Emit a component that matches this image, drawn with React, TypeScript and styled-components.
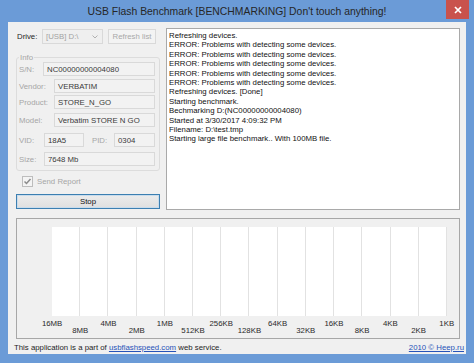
import React from 'react';
import styled, { createGlobalStyle } from 'styled-components';

const GlobalStyle = createGlobalStyle`
  html, body {
    margin: 0;
    padding: 0;
  }
  body {
    background-color: #6b9bd7;
    font-family: 'Liberation Sans', Arial, sans-serif;
  }
  * {
    box-sizing: border-box;
  }
`;

const Window = styled.div`
  display: flex;
  flex-direction: column;
  width: 474px;
  height: 363px;
  background-color: #6b9bd7;
  overflow: hidden;
`;

const TitleBar = styled.div`
  display: grid;
  grid-template-columns: 28px 1fr 28px;
  align-items: start;
  height: 22px;
  flex-shrink: 0;
`;

const Title = styled.div`
  grid-column: 2;
  align-self: center;
  text-align: center;
  font-size: 10.4px;
  line-height: 12px;
  padding-top: 1px;
  color: #262626;
  white-space: nowrap;
`;

const CloseButton = styled.div`
  display: flex;
  align-items: center;
  justify-content: center;
  width: 23px;
  height: 19px;
  background-color: #c9524c;
`;

const Client = styled.div`
  display: flex;
  flex-direction: column;
  flex: 1;
  margin: 0 8px 9px;
  padding: 6px 6px 0 8px;
  background-color: #f0f0f0;
  font-size: 7.8px;
  line-height: 9px;
  color: #1e1e1e;
`;

const TopArea = styled.div`
  display: flex;
  gap: 6px;
  height: 182px;
`;

const LeftColumn = styled.div`
  display: flex;
  flex-direction: column;
  width: 144px;
  flex-shrink: 0;
`;

const DriveRow = styled.div`
  display: flex;
  align-items: center;
  height: 15px;
  margin-top: 1px;
`;

const DriveLabel = styled.span`
  width: 26px;
  padding-left: 1px;
`;

const Combo = styled.div`
  display: flex;
  align-items: center;
  justify-content: space-between;
  width: 61px;
  height: 15px;
  padding: 0 4px 0 3px;
  border: 1px solid #d9d9d9;
  background-color: #efefef;
  color: #a2a2a2;
`;

const SmallButton = styled.div`
  display: flex;
  align-items: center;
  justify-content: center;
  width: 48px;
  height: 15px;
  margin-left: 5px;
  border: 1px solid #d9d9d9;
  background-color: #f3f3f3;
  color: #a8a8a8;
`;

const InfoGroup = styled.fieldset`
  margin: 9px 0 0;
  padding: 0 4px 4px 1px;
  border: 1px solid #dcdcdc;
  border-radius: 3px;
  min-width: 0;
`;

const Legend = styled.legend`
  margin-left: 1px;
  padding: 0 1px;
  color: #a6a6a6;
`;

const FieldRow = styled.div<{ $gap: number }>`
  display: flex;
  align-items: center;
  height: 14px;
  margin-top: ${(p) => p.$gap}px;
`;

const FieldLabel = styled.span<{ $width: number }>`
  width: ${(p) => p.$width}px;
  flex-shrink: 0;
  padding-left: 1px;
  color: #a6a6a6;
  white-space: nowrap;
`;

const FieldBox = styled.div<{ $width?: number }>`
  display: flex;
  align-items: center;
  height: 14px;
  ${(p) => (p.$width ? `width: ${p.$width}px;` : 'flex: 1;')}
  flex-shrink: 0;
  padding-left: 3px;
  border: 1px solid #d9d9d9;
  background-color: #f2f2f2;
  color: #3a3a3a;
  white-space: nowrap;
  overflow: hidden;
`;

const CheckRow = styled.div`
  display: flex;
  align-items: center;
  gap: 4px;
  height: 11px;
  margin-top: 5px;
  padding-left: 6px;
  color: #a6a6a6;
`;

const StopButton = styled.div`
  display: flex;
  align-items: center;
  justify-content: center;
  height: 15px;
  margin-top: 7px;
  border: 1px solid #3c7fb1;
  background: linear-gradient(#ececec, #dfdfdf);
  box-shadow: inset 0 0 0 1px #c9dcec;
  color: #111;
`;

const LogBox = styled.div`
  flex: 1;
  padding: 2px 2px;
  border: 1px solid #a9a9a9;
  background-color: #fff;
  color: #111;
`;

const LogLine = styled.div`
  line-height: 9.4px;
  white-space: nowrap;
`;

const ChartPanel = styled.div`
  display: flex;
  flex-direction: column;
  height: 121px;
  margin-top: 8px;
  padding: 8px 0 0 35px;
  border: 1px solid #a7a7a7;
  background-color: #f0f0f0;
`;

const Plot = styled.div`
  display: grid;
  grid-template-columns: repeat(14, 1fr);
  width: 395px;
  height: 89px;
  background-color: #fff;
`;

const PlotColumn = styled.div`
  border-right: 1px solid #e2e2e2;
`;

const AxisLabels = styled.div`
  display: grid;
  grid-template-columns: repeat(15, 28.2px);
  margin: 3px 0 0 -14px;
  color: #2a2a2a;
`;

const AxisLabel = styled.span<{ $low: boolean }>`
  text-align: center;
  padding-top: ${(p) => (p.$low ? 7 : 0)}px;
  white-space: nowrap;
`;

const Footer = styled.div`
  display: flex;
  justify-content: space-between;
  margin: 4px -4px 0 -2px;
  color: #1e1e1e;
`;

const Link = styled.a`
  color: #2753b8;
  text-decoration: underline;
`;

const logLines = [
  'Refreshing devices.',
  'ERROR: Problems with detecting some devices.',
  'ERROR: Problems with detecting some devices.',
  'ERROR: Problems with detecting some devices.',
  'ERROR: Problems with detecting some devices.',
  'ERROR: Problems with detecting some devices.',
  'Refreshing devices. [Done]',
  'Starting benchmark.',
  'Bechmarking D:(NC00000000004080)',
  'Started at 3/30/2017 4:09:32 PM',
  'Filename: D:\\test.tmp',
  'Starting large file benchmark.. With 100MB file.',
];

const sizes = [
  '16MB', '8MB', '4MB', '2MB', '1MB', '512KB', '256KB', '128KB',
  '64KB', '32KB', '16KB', '8KB', '4KB', '2KB', '1KB',
];

function App(): React.ReactElement {
  return (
    <Window>
      <GlobalStyle />
      <TitleBar>
        <Title>USB Flash Benchmark [BENCHMARKING] Don&apos;t touch anything!</Title>
        <CloseButton>
          <svg width="8" height="8" viewBox="0 0 8 8">
            <path d="M1 1 L7 7 M7 1 L1 7" stroke="#fff" strokeWidth="1.7" />
          </svg>
        </CloseButton>
      </TitleBar>
      <Client>
        <TopArea>
          <LeftColumn>
            <DriveRow>
              <DriveLabel>Drive:</DriveLabel>
              <Combo>
                <span>[USB] D:\</span>
                <svg width="6" height="4" viewBox="0 0 6 4">
                  <path d="M0.5 0.5 L3 3 L5.5 0.5" stroke="#b0b0b0" strokeWidth="1" fill="none" />
                </svg>
              </Combo>
              <SmallButton>Refresh list</SmallButton>
            </DriveRow>
            <InfoGroup>
              <Legend>Info</Legend>
              <FieldRow $gap={0}>
                <FieldLabel $width={25}>S/N:</FieldLabel>
                <FieldBox>NC00000000004080</FieldBox>
              </FieldRow>
              <FieldRow $gap={3}>
                <FieldLabel $width={36}>Vendor:</FieldLabel>
                <FieldBox>VERBATIM</FieldBox>
              </FieldRow>
              <FieldRow $gap={2}>
                <FieldLabel $width={36}>Product:</FieldLabel>
                <FieldBox>STORE_N_GO</FieldBox>
              </FieldRow>
              <FieldRow $gap={4}>
                <FieldLabel $width={36}>Model:</FieldLabel>
                <FieldBox>Verbatim STORE N GO</FieldBox>
              </FieldRow>
              <FieldRow $gap={6}>
                <FieldLabel $width={26}>VID:</FieldLabel>
                <FieldBox $width={40}>18A5</FieldBox>
                <FieldLabel $width={23} style={{ marginLeft: 7 }}>PID:</FieldLabel>
                <FieldBox>0304</FieldBox>
              </FieldRow>
              <FieldRow $gap={5}>
                <FieldLabel $width={26}>Size:</FieldLabel>
                <FieldBox>7648 Mb</FieldBox>
              </FieldRow>
            </InfoGroup>
            <CheckRow>
              <svg width="11" height="11" viewBox="0 0 11 11">
                <rect x="0.5" y="0.5" width="10" height="10" fill="#f4f4f4" stroke="#bdbdbd" />
                <path d="M2.5 5.5 L4.5 7.5 L8.5 3" stroke="#8c8c8c" strokeWidth="1.5" fill="none" />
              </svg>
              <span>Send Report</span>
            </CheckRow>
            <StopButton>Stop</StopButton>
          </LeftColumn>
          <LogBox>
            {logLines.map((line, i) => (
              <LogLine key={i}>{line}</LogLine>
            ))}
          </LogBox>
        </TopArea>
        <ChartPanel>
          <Plot>
            {Array.from({ length: 14 }).map((_, i) => (
              <PlotColumn key={i} />
            ))}
          </Plot>
          <AxisLabels>
            {sizes.map((s, i) => (
              <AxisLabel key={s + i} $low={i % 2 === 1}>
                {s}
              </AxisLabel>
            ))}
          </AxisLabels>
        </ChartPanel>
        <Footer>
          <span>
            This application is a part of <Link>usbflashspeed.com</Link> web service.
          </span>
          <Link>2010 © Heep.ru</Link>
        </Footer>
      </Client>
    </Window>
  );
}

export default App;
